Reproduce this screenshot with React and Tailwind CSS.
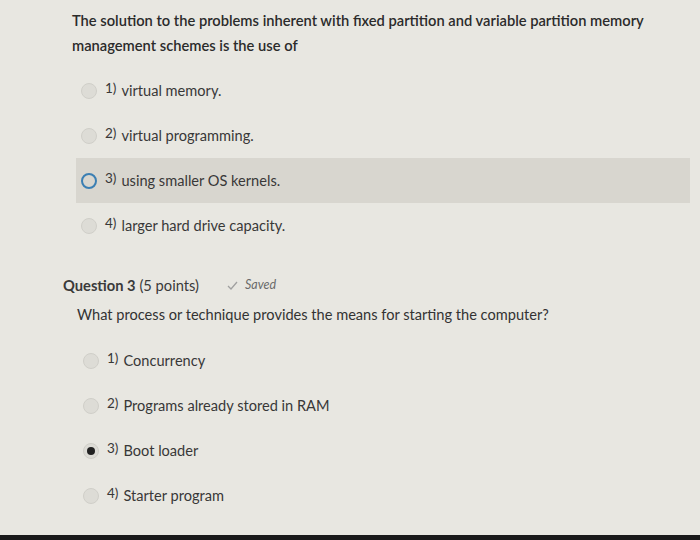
const q1 = [
  { n: '1)', label: 'virtual memory.' },
  { n: '2)', label: 'virtual programming.' },
  { n: '3)', label: 'using smaller OS kernels.', focus: true },
  { n: '4)', label: 'larger hard drive capacity.' },
]

const q3 = [
  { n: '1)', label: 'Concurrency' },
  { n: '2)', label: 'Programs already stored in RAM' },
  { n: '3)', label: 'Boot loader', checked: true },
  { n: '4)', label: 'Starter program' },
]

function Radio({ focus, checked }) {
  if (focus) {
    return <span className="w-[16px] h-[16px] rounded-full border-2 border-[#3b7fb3] shrink-0" />
  }
  return (
    <span className="w-[16px] h-[16px] rounded-full bg-[#dddcd6] border border-[#d0cfc9] shrink-0 flex items-center justify-center">
      {checked && <span className="w-[8px] h-[8px] rounded-full bg-[#222]" />}
    </span>
  )
}

function Option({ n, label, focus, checked }) {
  return (
    <div className={`h-[45px] flex items-center gap-[8px] pl-[5px] ${focus ? 'bg-[#d8d6cf]' : ''}`}>
      <Radio focus={focus} checked={checked} />
      <span className="text-[14.6px] text-[#383838]">
        <span className="relative -top-[3px] text-[13.5px] mr-[5px]">{n}</span>
        {label}
      </span>
    </div>
  )
}

export default function App() {
  return (
    <div
      className="w-[700px] h-[540px] bg-[#e8e7e1] flex flex-col text-[#2e2e2e] overflow-hidden"
      style={{ fontFamily: 'Lato, "Open Sans", sans-serif' }}
    >
      <div className="flex-1">
        <p className="pl-[72px] pr-[40px] pt-[8px] text-[14.7px] font-semibold leading-[25px] text-[#2b2b2b]">
          The solution to the problems inherent with fixed partition and variable partition memory management schemes is the use of
        </p>

        <div className="mt-[10px] ml-[76px] mr-[10px]">
          {q1.map((o) => (
            <Option key={o.n} {...o} />
          ))}
        </div>

        <div className="mt-[26px] ml-[63px] flex items-center">
          <span className="text-[14.7px] text-[#3a3a3a]">
            <span className="font-bold">Question 3</span> (5 points)
          </span>
          <span className="ml-[28px] flex items-center gap-[7px] text-[12.5px] italic text-[#6a6a6a]">
            <svg width="11" height="9" viewBox="0 0 11 9" fill="none" stroke="#a0a0a0" strokeWidth="1.3">
              <path d="M1 5l3 3 6-7" />
            </svg>
            Saved
          </span>
        </div>

        <p className="mt-[8px] ml-[77px] text-[14.6px] text-[#333]">
          What process or technique provides the means for starting the computer?
        </p>

        <div className="mt-[13px] ml-[78px]">
          {q3.map((o) => (
            <Option key={o.n} {...o} />
          ))}
        </div>
      </div>
      <div className="h-[5px] bg-[#1a1a1a]" />
    </div>
  )
}
